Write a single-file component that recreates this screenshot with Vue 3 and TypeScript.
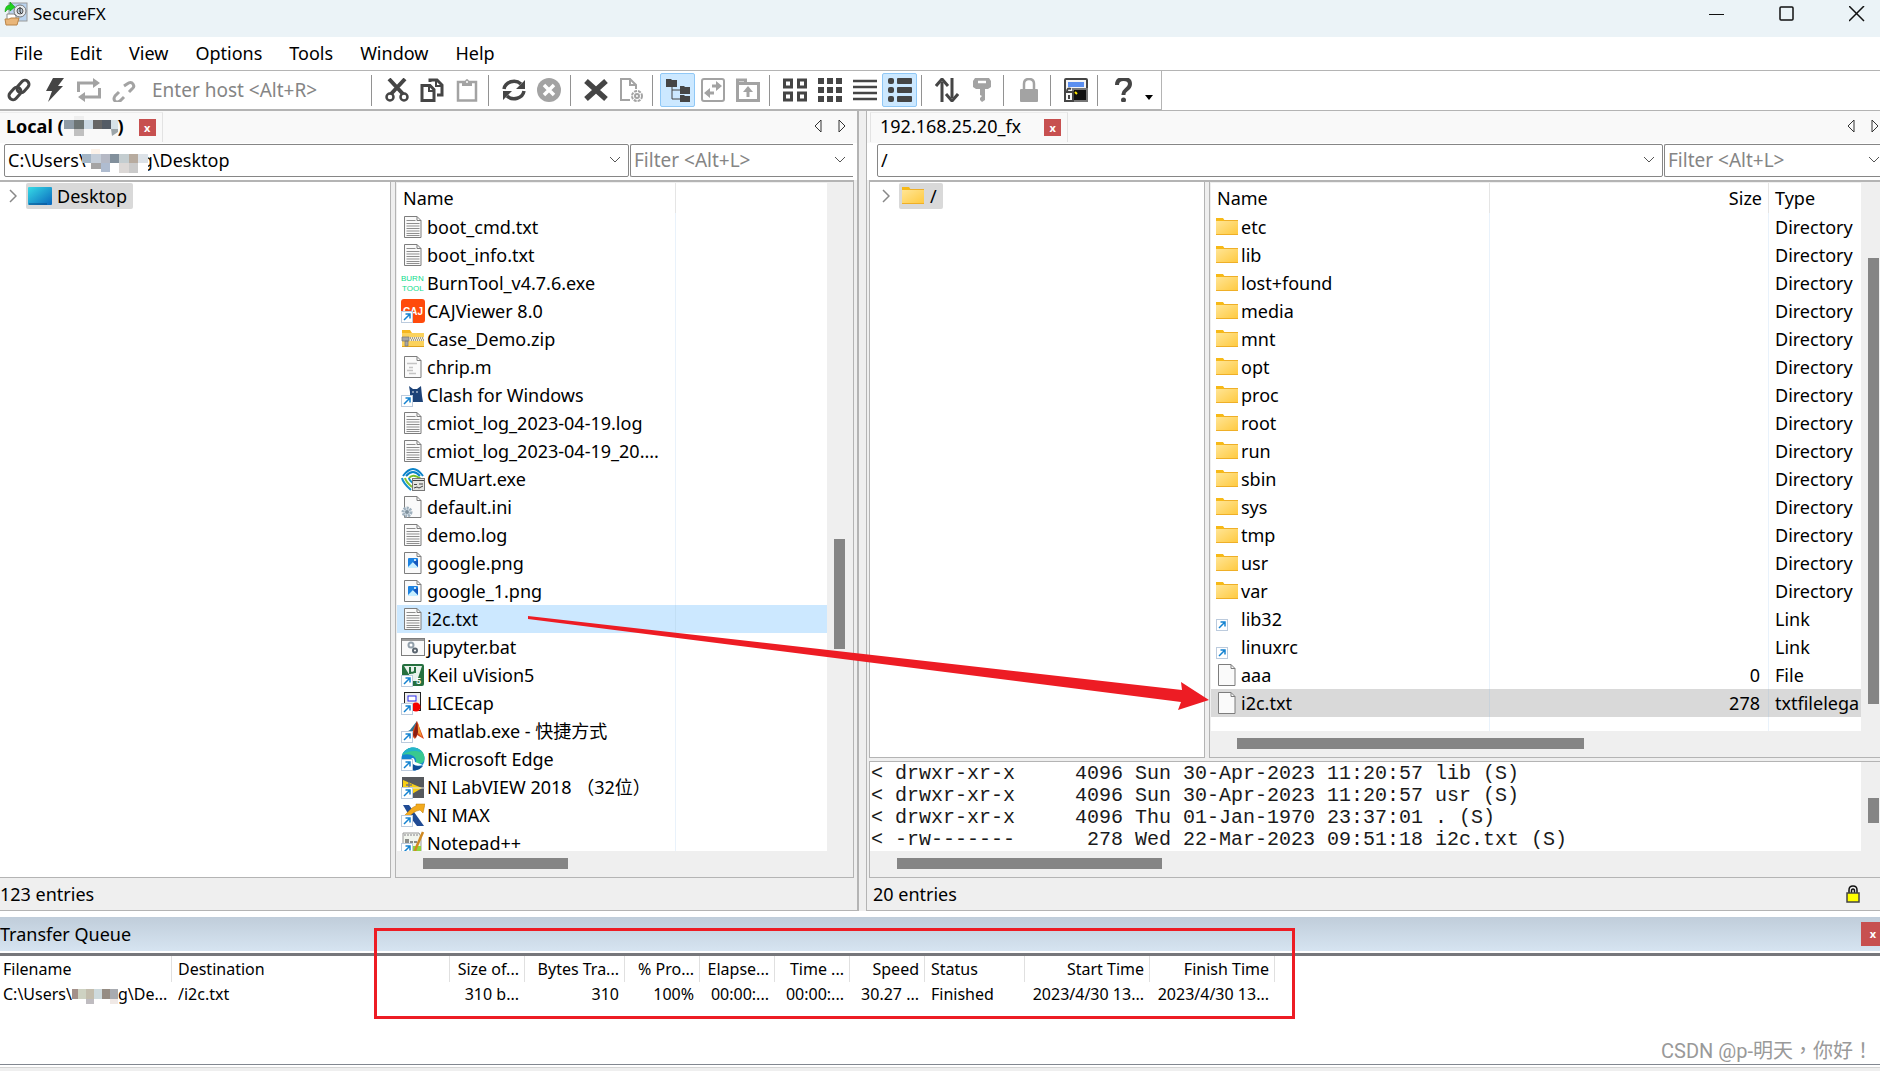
<script setup lang="ts">
import { ref } from 'vue'

interface FileRow {
  name: string
  icon: string
  size?: string
  type?: string
  selected?: boolean
}
interface Tool {
  label: string
  icon: string
  active?: boolean
}
interface Column {
  title: string
  value: string
  width: number
  right?: boolean
}

const menus = ['File', 'Edit', 'View', 'Options', 'Tools', 'Window', 'Help']

const badge =
  '<rect x=".5" y="12.5" width="11" height="11" fill="#fff" stroke="#bccbdd"/><path d="M3 21l5.500-5.500M4.500 15h4.500v4.500" fill="none" stroke="#1583d1" stroke-width="1.500"/>'
const page = '<path d="M3.500 1.500h12.500l4 4v17H3.500z" fill="#fafafa" stroke="#7d7d7d"/><path d="M16 1.500v4h4" fill="none" stroke="#7d7d7d"/>'

const fileIcons: Record<string, string> = {
  text: page + '<path d="M5.500 5.500h9M5.500 8.500h13M5.500 11h13M5.500 13.500h13M5.500 16h13M5.500 18.500h13M5.500 20.500h13" stroke="#8f8f8f"/>',
  code: page + '<path d="M6 8.500h10M8 12.500h4M6 15.500h6M8 18.500h7" stroke="#c4c4c4" stroke-width="1.500"/>',
  blank: page,
  burn: '<g fill="#10dc8c" font-family="Liberation Sans, sans-serif" font-size="8"><text x="0" y="10">BURN</text><text x="1" y="20">TOOL</text></g>',
  caj: '<rect width="24" height="24" rx="3" fill="#ff4a0c"/><text x="2" y="16" font-family="Liberation Sans, sans-serif" font-size="10" font-weight="bold" fill="#fff">CAJ</text>' + badge,
  zip: '<path d="M1 3h8l2 3h12v14H1z" fill="#f5b720"/><rect x="1" y="6" width="22" height="13" fill="#fbd25c"/><path d="M1 19.500h22" stroke="#dfa21d"/><path d="M1 12h22" stroke="#f3ead0" stroke-width="4"/><path d="M9 11h14M10 13h13" stroke="#555" stroke-dasharray="1 1"/><path d="M1 10h7v4H1zM4 14h3v5H4z" fill="#a6a6a6" stroke="#777" stroke-width=".7"/>',
  clash: '<path d="M8 3l4 3h4l4-3 1 10 1 6H9V9z" fill="#1d4277"/><circle cx="12" cy="9" r=".8" fill="#fff"/><circle cx="16" cy="9" r=".8" fill="#fff"/>' + badge,
  uart: '<g fill="none" stroke-width="2"><path d="M2 9Q12-5 22 9" stroke="#0b83c9"/><path d="M5 9Q12 1 19 9" stroke="#0b83c9"/><path d="M8 11Q12 6 20 12" stroke="#7abf2c"/><path d="M1 11q1 5 9 12" stroke="#1592cf"/><path d="M4 11q1 4 7 9" stroke="#83c332"/><path d="M8 11q0 2 4 5" stroke="#1592cf"/></g><rect x="11.500" y="11.500" width="12" height="12" fill="#e4e4e0" stroke="#777"/><path d="M12 13.500h11M13 17.500h3M18 17h4M13 21l3-1 2 1 4-2" stroke="#444" fill="none"/>',
  ini: page + '<circle cx="6" cy="17" r="4" fill="#d7e2ea" stroke="#9fb0bd" stroke-width="3" stroke-dasharray="2 1"/><circle cx="6" cy="17" r="2" fill="#7f909c"/>',
  image: page + '<rect x="7" y="7" width="10" height="10" rx="1" fill="#1d83e2"/><path d="M7 16l5-5 5 5v1H7z" fill="#c5edff"/><path d="M12 11l5 5V9z" fill="#1457bd"/><circle cx="14" cy="9" r="1" fill="#fff"/>',
  bat: '<rect x=".5" y="3.500" width="23" height="17" fill="#fafafa" stroke="#7d7d7d"/><path d="M1 5h22" stroke="#999" stroke-width="2"/><circle cx="10" cy="10" r="2.500" fill="#fff" stroke="#93a0ab" stroke-width="2"/><circle cx="14" cy="15.500" r="2" fill="#fff" stroke="#5c6670" stroke-width="2"/>',
  keil: '<rect x="1" y="1" width="22" height="22" rx="2" fill="#26703f"/><path d="M3 3h18l-5 15h-4z" fill="#e9f2ec"/><path d="M9 4v7M9 9q3 2 5-1V4v6" fill="none" stroke="#26703f" stroke-width="2"/><text x="15" y="21" font-family="Liberation Sans, sans-serif" font-size="9" font-weight="bold" fill="#fff">5</text>' + badge,
  lice: '<rect x="3.500" y="1.500" width="16" height="18" fill="#eee" stroke="#222"/><rect x="7" y="5" width="8" height="5" fill="#fff" stroke="#2a2ae8"/><circle cx="15" cy="16" r="4.500" fill="#f40000"/>' + badge,
  matlab: '<path d="M3 14l6-3 7-9-3 14z" fill="#2d7796"/><path d="M16 2l-6 14 4 4 2-4 7 4z" fill="#d9491a"/><path d="M16 2l-4 14 3 3 2-6z" fill="#8b1d12"/><path d="M17 4l4 14-4-4z" fill="#f59a35"/>' + badge,
  edge: '<circle cx="12" cy="12" r="11.500" fill="#1484cf"/><path d="M1 8C6-3 23-1 23.500 11c0 5-4 7-9 5 3-5-4-11-13.500-8z" fill="#39c98f"/><path d="M1 8C5-1 17-2 21 6 14 2 6 5 1 8z" fill="#23b5c9"/><path d="M10 13c1 6 7 7 12 6-3 4-9 6-13 3z" fill="#0d4d97"/><path d="M10 12q3-3 4 3l8 3q-7 2-10-1z" fill="#fff"/>' + badge,
  labview: '<rect x="1" y="2" width="22" height="21" fill="#56595d"/><path d="M2 5l19 8-10 6H2z" fill="#f7ce14"/><path d="M0 13h24" stroke="#e6e6e6"/><path d="M5 10h6M8 7v6" stroke="#777" stroke-width="1.500"/>' + badge,
  nimax: '<path d="M2 2h6l15 21h-7L9 14z" fill="#204b94"/><path d="M2 14C8 8 11 4 15 3V1h9l-2 9-3-3C14 8 10 11 7 15z" fill="#f3aa1d" stroke="#b6790c" stroke-width=".5"/>' + badge,
  npp: '<path d="M2 2h16l2 4v16H2z" fill="#f2f5ee" stroke="#999"/><path d="M3 4h15" stroke="#bbb" stroke-width="2" stroke-dasharray="2 1"/><path d="M5 8v4M7 8v4M9 11h3M13 11h3" stroke="#222"/><path d="M12 15h8v7h-8z" fill="#8fd63c"/><path d="M22 1l-7 16-1 3" stroke="#d08a23" stroke-width="2.500" fill="none"/>' + badge,
  folder: '<path d="M1 3h7l2 3h13v13H1z" fill="#f7b917"/><rect x="1" y="6" width="22" height="14" fill="url(#folderFill)"/><path d="M1 19.500h22M9 5.500h14" stroke="#efaf27"/>',
  link: '<g transform="translate(1 0)">' + badge + '</g>',
}

const localFiles: FileRow[] = [
  { name: 'boot_cmd.txt', icon: 'text' },
  { name: 'boot_info.txt', icon: 'text' },
  { name: 'BurnTool_v4.7.6.exe', icon: 'burn' },
  { name: 'CAJViewer 8.0', icon: 'caj' },
  { name: 'Case_Demo.zip', icon: 'zip' },
  { name: 'chrip.m', icon: 'code' },
  { name: 'Clash for Windows', icon: 'clash' },
  { name: 'cmiot_log_2023-04-19.log', icon: 'text' },
  { name: 'cmiot_log_2023-04-19_20....', icon: 'text' },
  { name: 'CMUart.exe', icon: 'uart' },
  { name: 'default.ini', icon: 'ini' },
  { name: 'demo.log', icon: 'text' },
  { name: 'google.png', icon: 'image' },
  { name: 'google_1.png', icon: 'image' },
  { name: 'i2c.txt', icon: 'text', selected: true },
  { name: 'jupyter.bat', icon: 'bat' },
  { name: 'Keil uVision5', icon: 'keil' },
  { name: 'LICEcap', icon: 'lice' },
  { name: 'matlab.exe - 快捷方式', icon: 'matlab' },
  { name: 'Microsoft Edge', icon: 'edge' },
  { name: 'NI LabVIEW 2018 （32位）', icon: 'labview' },
  { name: 'NI MAX', icon: 'nimax' },
  { name: 'Notepad++', icon: 'npp' },
]

const directories = ['etc', 'lib', 'lost+found', 'media', 'mnt', 'opt', 'proc', 'root', 'run', 'sbin', 'sys', 'tmp', 'usr', 'var']
const remoteFiles: FileRow[] = [
  ...directories.map((name) => ({ name, icon: 'folder', type: 'Directory' })),
  { name: 'lib32', icon: 'link', type: 'Link' },
  { name: 'linuxrc', icon: 'link', type: 'Link' },
  { name: 'aaa', icon: 'blank', size: '0', type: 'File' },
  { name: 'i2c.txt', icon: 'blank', size: '278', type: 'txtfilelega', selected: true },
]

const dark = '#454545'
const grey = '#a3a3a3'
const connectTools: Tool[] = [
  { label: 'Connect', icon: `<g fill="none" stroke="${dark}" stroke-width="3"><rect x="12" y="1.500" width="8" height="14" rx="4" transform="rotate(42 16 8.500)"/><rect x="4" y="8.500" width="8" height="14" rx="4" transform="rotate(42 8 15.500)"/></g>` },
  { label: 'Quick Connect', icon: `<path d="M11 0h11l-6 8h5L6 24l4-11H4z" fill="${dark}"/>` },
  { label: 'Reconnect', icon: `<path d="M1.500 14V5H17M22.500 10v9H7" fill="none" stroke="${grey}" stroke-width="3"/><path d="M16 0l7 5-7 5zM8 14l-7 5 7 5z" fill="${grey}"/>` },
  { label: 'Disconnect', icon: `<g fill="none" stroke="${grey}" stroke-width="3"><path d="M12 8l3-2q4-3 6 0t-1 5l-3 3M7 14l-4 4q-2 3 0 5t5 0l4-4"/></g>` },
]
const toolGroups: Tool[][] = [
  [
    { label: 'Cut', icon: `<g fill="none" stroke="${dark}" stroke-width="2.500"><circle cx="5" cy="19" r="3.500"/><circle cx="19" cy="19" r="3.500"/></g><path d="M4 1l14 15M20 1L6 16" stroke="${dark}" stroke-width="4"/>` },
    { label: 'Copy', icon: `<g fill="none" stroke="${dark}" stroke-width="3"><path d="M2 7.500h8l4 4V22.500H2z"/><path d="M10 4V2h7l5 5v10h-5"/></g><path d="M9 7v6h6M16 1v7h6" fill="none" stroke="${dark}" stroke-width="2"/>` },
    { label: 'Paste', icon: `<path d="M3 4h18v18.500H3z" fill="none" stroke="${grey}" stroke-width="2.500"/><path d="M7 3h3q2-4 4 0h3v5H7z" fill="${grey}"/><circle cx="12" cy="4" r="1" fill="#fff"/>` },
  ],
  [
    { label: 'Refresh', icon: `<g fill="none" stroke="${dark}" stroke-width="3.500"><path d="M2 11A10 9 0 0 1 19 6M22 13A10 9 0 0 1 5 18"/></g><path d="M23 2v9h-9zM1 22v-9h9z" fill="${dark}"/>` },
    { label: 'Stop', icon: `<circle cx="12" cy="12" r="12" fill="${grey}"/><path d="M7 7l10 10M17 7L7 17" stroke="#fff" stroke-width="3.500"/>` },
  ],
  [
    { label: 'Delete', icon: `<path d="M2 3l20 18M22 3L2 21" stroke="${dark}" stroke-width="5.500"/>` },
    { label: 'Properties', icon: `<g fill="none" stroke="${grey}" stroke-width="2"><path d="M11 22H2V1h9l6 6v4M11 1v6h6"/><circle cx="18" cy="18" r="2"/><circle cx="18" cy="18" r="5" stroke-dasharray="3 1"/></g>` },
  ],
  [
    { label: 'Tree View', active: true, icon: `<g fill="${dark}"><path d="M0 1h5l1 1h5v7H0zM14 8h4l1 1h5v7H14zM14 17h4l1 1h5v6H14z"/></g><path d="M6 9v12h9M6 12h9" fill="none" stroke="${dark}"/>` },
    { label: 'Synchronize', icon: `<rect x="1" y="1" width="22" height="22" rx="2" fill="none" stroke="${grey}" stroke-width="2"/><path d="M11 8h6M7 15h6" stroke="${grey}" stroke-width="3"/><path d="M15 3l6 5-6 5zM9 10l-6 5 6 5z" fill="${grey}"/>` },
    { label: 'Up One Level', icon: `<path d="M1.500 5.500h21v17h-21zM1.500 5V2h8v3" fill="none" stroke="${grey}" stroke-width="3"/><path d="M12 19v-7" stroke="${grey}" stroke-width="3"/><path d="M7 14l5-6 5 6z" fill="${grey}"/>` },
  ],
  [
    { label: 'Large Icons', icon: `<g fill="none" stroke="${dark}" stroke-width="3"><path d="M1.500 2h7v7h-7zM15.500 2h7v7h-7zM1.500 15h7v7h-7zM15.500 15h7v7h-7z"/></g>` },
    { label: 'Small Icons', icon: `<g fill="${dark}"><path d="M0 0h6v6H0zM9 0h6v6H9zM18 0h6v6h-6zM0 9h6v6H0zM9 9h6v6H9zM18 9h6v6h-6zM0 18h6v6H0zM9 18h6v6H9zM18 18h6v6h-6z"/></g>` },
    { label: 'List', icon: `<path d="M0 3h24M0 9h24M0 15h24M0 21h24" stroke="${dark}" stroke-width="2.500"/>` },
    { label: 'Details', active: true, icon: `<g fill="${dark}"><rect width="6" height="6" rx="2"/><rect y="9" width="6" height="6" rx="2"/><rect y="18" width="6" height="6" rx="2"/><rect x="9" width="15" height="6" rx="1"/><rect x="9" y="9" width="15" height="6" rx="1"/><rect x="9" y="18" width="15" height="6" rx="1"/></g>` },
  ],
  [
    { label: 'Transfer', icon: `<path d="M7 24V4M17 0v20" stroke="${dark}" stroke-width="3"/><path d="M1 8l6-7 6 7M11 16l6 7 6-7" fill="none" stroke="${dark}" stroke-width="3"/>` },
    { label: 'Key', icon: `<path d="M5 0h14l2 3v6l-3 2h-3v11l-3 2-2-2v-2l2-2-2-1v-6H6L3 9V3z" fill="${grey}"/><path d="M8 4h8" stroke="#fff" stroke-width="2.500"/>` },
  ],
  [{ label: 'Lock', icon: `<rect x="3" y="11" width="18" height="13" rx="1" fill="${grey}"/><path d="M7 12V6q0-5 5-5t5 5v6" fill="none" stroke="${grey}" stroke-width="2.500"/>` }],
  [{ label: 'Terminal', icon: `<rect x="1" y="1" width="22" height="20" rx="1" fill="#f4f4f4" stroke="${dark}" stroke-width="2"/><path d="M4 4h16v5H4z" fill="#5b8ff0"/><path d="M9 11h14v12H9z" fill="#111" stroke="#777" stroke-width="2"/><path d="M1 14h8v9H1z" fill="#f8f8f8" stroke="${dark}" stroke-width="2"/><path d="M3 14q0-5 4-3" fill="none" stroke="${dark}" stroke-width="2"/><path d="M11 14l2 2" stroke="#ffe600" stroke-width="2"/><path d="M5 17v4" stroke="${dark}" stroke-width="2"/>` }],
  [{ label: 'Help', icon: `<path d="M6 7q0-6 6.500-6t6.500 5q0 3-4 6-2.500 2-2.500 4v1" fill="none" stroke="${dark}" stroke-width="4"/><circle cx="12.500" cy="22" r="2.500" fill="${dark}"/>` }],
]

const logLines = [
  '< drwxr-xr-x     4096 Sun 30-Apr-2023 11:20:57 lib (S)',
  '< drwxr-xr-x     4096 Sun 30-Apr-2023 11:20:57 usr (S)',
  '< drwxr-xr-x     4096 Thu 01-Jan-1970 23:37:01 . (S)',
  '< -rw-------      278 Wed 22-Mar-2023 09:51:18 i2c.txt (S)',
]

const queue: Column[] = [
  { title: 'Destination', value: '/i2c.txt', width: 278 },
  { title: 'Size of...', value: '310 b...', width: 75, right: true },
  { title: 'Bytes Tra...', value: '310', width: 100, right: true },
  { title: '% Pro...', value: '100%', width: 75, right: true },
  { title: 'Elapse...', value: '00:00:...', width: 75, right: true },
  { title: 'Time ...', value: '00:00:...', width: 75, right: true },
  { title: 'Speed', value: '30.27 ...', width: 75, right: true },
  { title: 'Status', value: 'Finished', width: 100 },
  { title: 'Start Time', value: '2023/4/30 13...', width: 125, right: true },
  { title: 'Finish Time', value: '2023/4/30 13...', width: 125, right: true },
]

const host = ref('')
const localPath = ref('C:\\Users\\            g\\Desktop')
const remotePath = ref('/')
const localFilter = ref('')
const remoteFilter = ref('')
</script>

<template>
  <div class="app">
    <svg class="defs" width="0" height="0" aria-hidden="true">
      <defs>
        <linearGradient id="folderFill" x1="0" y1="0" x2="1" y2="1">
          <stop offset="0" stop-color="#ffe596" /><stop offset="1" stop-color="#ffc93d" />
        </linearGradient>
        <linearGradient id="desktopFill" x1="0" y1="0" x2="1" y2="1">
          <stop offset="0" stop-color="#36dbe6" /><stop offset="1" stop-color="#0a66bd" />
        </linearGradient>
      </defs>
    </svg>

    <header class="titlebar">
      <svg width="24" height="24" viewBox="0 0 24 24" aria-hidden="true">
        <rect x="5" y="1" width="18" height="18" fill="#b9d3ee" stroke="#9a9a9a" />
        <circle cx="16" cy="9" r="6" fill="#e8ecef" stroke="#777" />
        <circle cx="16" cy="9" r="3" fill="#b7c5d2" stroke="#555" />
        <path d="M16 5v5l2 2" stroke="#333" fill="none" />
        <path d="M1 10Q1 3 6 3V0l5 5-5 4V7Q3 7 1 10z" fill="#1ed21e" stroke="#0a8d0a" stroke-width=".5" />
        <path d="M3 12h7l2 2v5H3z" fill="#fff" stroke="#888" />
        <path d="M1 17h4l2-1h8l-2 7H2z" fill="#e9b67a" stroke="#b98447" />
      </svg>
      <h1>SecureFX</h1>
      <div class="window-buttons">
        <button aria-label="Minimize"><svg width="16" height="16"><path d="M0 8.500h15" stroke="#111" /></svg></button>
        <button aria-label="Maximize"><svg width="16" height="16"><rect x="1" y="1" width="13" height="13" rx="1" fill="none" stroke="#111" stroke-width="1.500" /></svg></button>
        <button aria-label="Close"><svg width="16" height="16"><path d="M0 0l15 15M15 0L0 15" stroke="#111" stroke-width="1.500" /></svg></button>
      </div>
    </header>

    <nav class="menubar"><button v-for="m in menus" :key="m">{{ m }}</button></nav>

    <div class="toolbar">
      <div class="tools">
        <button v-for="t in connectTools" :key="t.label" class="tool" :aria-label="t.label">
          <svg width="24" height="24" viewBox="0 0 24 24" v-html="t.icon" />
        </button>
        <input v-model="host" class="host" aria-label="Host" placeholder="Enter host &lt;Alt+R&gt;" />
        <template v-for="(group, g) in toolGroups" :key="g">
          <span class="sep" />
          <button v-for="t in group" :key="t.label" class="tool" :class="{ active: t.active }" :aria-label="t.label">
            <svg width="24" height="24" viewBox="0 0 24 24" v-html="t.icon" />
          </button>
        </template>
        <button class="more" aria-label="Toolbar options"><svg width="8" height="5"><path d="M0 0h8L4 5z" fill="#000" /></svg></button>
      </div>
    </div>

    <main class="panes">
      <section class="pane local" aria-label="Local">
        <div class="tabs">
          <div class="tab active">
            <span class="tab-label">Local (<svg width="54" height="20" viewBox="0 0 54 20" aria-hidden="true">
              <rect x="0" y="4" width="10" height="9" fill="#8e9ba6" /><rect x="10" y="4" width="10" height="9" fill="#6d7575" />
              <rect x="20" y="4" width="9" height="9" fill="#cbd9e4" /><rect x="29" y="4" width="9" height="9" fill="#666" />
              <rect x="38" y="4" width="9" height="9" fill="#545c66" /><rect x="47" y="4" width="7" height="9" fill="#d6e2e8" />
              <rect x="10" y="13" width="10" height="7" fill="#c0c0c0" /><path d="M47 13h7v3l-6 4z" fill="#9ca5a9" />
              <rect x="10" y="0" width="10" height="4" fill="#eee" />
            </svg>)</span>
            <button class="close" aria-label="Close tab">x</button>
          </div>
          <div class="nav">
            <button aria-label="Previous tab"><svg width="8" height="14"><path d="M7 1v12L1 7z" fill="none" stroke="#333" /></svg></button>
            <button aria-label="Next tab"><svg width="8" height="14"><path d="M1 1v12l6-6z" fill="none" stroke="#333" /></svg></button>
          </div>
        </div>
        <div class="paths">
          <div class="combo path">
            <input v-model="localPath" aria-label="Local path" />
            <svg class="mosaic" width="66" height="26" viewBox="0 0 66 26" aria-hidden="true">
              <rect x="0" y="5" width="9" height="9" fill="#a4b5c5" /><rect x="9" y="0" width="9" height="5" fill="#fcf2e9" />
              <rect x="9" y="5" width="10" height="9" fill="#c5ced9" /><rect x="19" y="5" width="9" height="9" fill="#b5b9c5" />
              <rect x="28" y="5" width="9" height="9" fill="#82909c" /><rect x="37" y="5" width="10" height="9" fill="#c4cdd0" />
              <rect x="47" y="5" width="9" height="9" fill="#b7ab9f" /><rect x="56" y="5" width="10" height="9" fill="#dce2e8" />
              <rect x="9" y="14" width="10" height="6" fill="#a5a4a4" /><rect x="19" y="14" width="9" height="9" fill="#afbcd0" />
              <rect x="37" y="14" width="10" height="10" fill="#dcd8d6" /><rect x="47" y="14" width="9" height="10" fill="#cacaca" />
              <rect x="56" y="14" width="10" height="12" fill="#fff" />
            </svg>
            <button aria-label="Local path history"><svg width="12" height="8"><path d="M1 1l5 5 5-5" fill="none" stroke="#555" /></svg></button>
          </div>
          <div class="combo filter">
            <input v-model="localFilter" aria-label="Local filter" placeholder="Filter &lt;Alt+L&gt;" />
            <button aria-label="Local filter history"><svg width="12" height="8"><path d="M1 1l5 5 5-5" fill="none" stroke="#555" /></svg></button>
          </div>
        </div>
        <div class="browser">
          <div class="tree">
            <button class="expand" aria-label="Expand Desktop"><svg width="8" height="14"><path d="M1 1l6 6-6 6" fill="none" stroke="#888" stroke-width="1.500" /></svg></button>
            <button class="node">
              <svg width="24" height="18"><rect width="24" height="18" rx="1" fill="url(#desktopFill)" /><path d="M1 17h18" stroke="#0b4d8b" /></svg>
              Desktop
            </button>
          </div>
          <div class="listing">
            <div class="viewport">
              <table class="files">
                <colgroup><col class="c-name" /><col /></colgroup>
                <thead><tr><th>Name</th><th></th></tr></thead>
                <tbody>
                  <tr v-for="f in localFiles" :key="f.name" :class="{ selected: f.selected }">
                    <td><span class="file"><svg width="24" height="24" viewBox="0 0 24 24" v-html="fileIcons[f.icon]" />{{ f.name }}</span></td>
                    <td></td>
                  </tr>
                </tbody>
              </table>
            </div>
            <div class="vbar"><i class="v-local" /></div>
            <div class="hbar"><i class="h-local" /></div>
          </div>
        </div>
        <footer class="status">123 entries</footer>
      </section>

      <section class="pane remote" aria-label="Remote">
        <div class="tabs">
          <div class="tab">
            <span class="tab-label">192.168.25.20_fx</span>
            <button class="close" aria-label="Close tab">x</button>
          </div>
          <div class="nav">
            <button aria-label="Previous tab"><svg width="8" height="14"><path d="M7 1v12L1 7z" fill="none" stroke="#333" /></svg></button>
            <button aria-label="Next tab"><svg width="8" height="14"><path d="M1 1v12l6-6z" fill="none" stroke="#333" /></svg></button>
          </div>
        </div>
        <div class="paths">
          <div class="combo path">
            <input v-model="remotePath" aria-label="Remote path" />
            <button aria-label="Remote path history"><svg width="12" height="8"><path d="M1 1l5 5 5-5" fill="none" stroke="#555" /></svg></button>
          </div>
          <div class="combo filter">
            <input v-model="remoteFilter" aria-label="Remote filter" placeholder="Filter &lt;Alt+L&gt;" />
            <button aria-label="Remote filter history"><svg width="12" height="8"><path d="M1 1l5 5 5-5" fill="none" stroke="#555" /></svg></button>
          </div>
        </div>
        <div class="browser">
          <div class="tree">
            <button class="expand" aria-label="Expand root"><svg width="8" height="14"><path d="M1 1l6 6-6 6" fill="none" stroke="#888" stroke-width="1.500" /></svg></button>
            <button class="node"><svg width="24" height="24" viewBox="0 0 24 24" v-html="fileIcons.folder" />/</button>
          </div>
          <div class="listing">
            <div class="viewport">
              <table class="files">
                <colgroup><col class="c-name" /><col class="c-size" /><col /></colgroup>
                <thead><tr><th>Name</th><th class="right">Size</th><th>Type</th></tr></thead>
                <tbody>
                  <tr v-for="f in remoteFiles" :key="f.name" :class="{ inactive: f.selected }">
                    <td><span class="file"><svg width="24" height="24" viewBox="0 0 24 24" v-html="fileIcons[f.icon]" />{{ f.name }}</span></td>
                    <td class="right">{{ f.size }}</td>
                    <td class="type">{{ f.type }}</td>
                  </tr>
                  <tr class="rest"><td></td><td></td><td></td></tr>
                </tbody>
              </table>
            </div>
            <div class="vbar"><i class="v-remote" /></div>
            <div class="hbar"><i class="h-remote" /></div>
          </div>
        </div>
        <div class="log">
          <pre>{{ logLines.join('\n') }}</pre>
          <div class="vbar"><i class="v-log" /></div>
          <div class="hbar"><i class="h-log" /></div>
        </div>
        <footer class="status">
          20 entries
          <svg width="14" height="18" viewBox="0 0 14 18" role="img" aria-label="Secure connection">
            <path d="M3 8V5q0-4 4-4t4 4v3M5.500 8V6q0-2 1.500-2t1.500 2v2" fill="none" stroke="#111" stroke-width="1.500" />
            <rect x="1" y="8" width="12" height="9" fill="#ff0" stroke="#444" stroke-width="1.500" />
          </svg>
        </footer>
      </section>
    </main>

    <section class="transfer" aria-label="Transfer Queue">
      <div class="transfer-head">
        <h2>Transfer Queue</h2>
        <button aria-label="Close transfer queue">x</button>
      </div>
      <div class="transfer-body">
        <table class="queue">
          <colgroup>
            <col class="q-file" />
            <col v-for="c in queue" :key="c.title" :style="{ width: c.width + 'px' }" />
          </colgroup>
          <thead>
            <tr>
              <th>Filename</th>
              <th v-for="c in queue" :key="c.title" :class="{ right: c.right }">{{ c.title }}</th>
            </tr>
          </thead>
          <tbody>
            <tr>
              <td>C:\Users\<svg width="46" height="16" viewBox="0 0 46 16" aria-hidden="true">
                <rect x="0" y="1" width="6" height="10" fill="#a3908a" /><rect x="6" y="1" width="8" height="10" fill="#ced2c2" />
                <rect x="14" y="1" width="8" height="10" fill="#c3bdad" /><rect x="22" y="1" width="8" height="10" fill="#cedadd" />
                <rect x="30" y="1" width="8" height="10" fill="#958c83" /><rect x="38" y="1" width="8" height="10" fill="#a8abb0" />
                <rect x="14" y="11" width="8" height="5" fill="#bfbcc0" /><rect x="38" y="11" width="8" height="5" fill="#f0e9e6" />
              </svg>g\De...</td>
              <td v-for="c in queue" :key="c.title" :class="{ right: c.right }">{{ c.value }}</td>
            </tr>
          </tbody>
        </table>
      </div>
    </section>

    <svg class="arrow" width="682" height="96" viewBox="0 0 682 96" aria-hidden="true">
      <path d="M0 0L654 74L653 66L681 84L650 94L653 86L0 3z" fill="#ed1c24" />
    </svg>
    <div class="highlight" />
    <div class="watermark">CSDN @p-明天，你好！</div>
  </div>
</template>

<style>
body {
  margin: 0;
}
</style>

<style scoped>
.app {
  position: relative;
  display: flex;
  flex-direction: column;
  height: 100vh;
  min-height: 640px;
  overflow: hidden;
  background: #fff;
  color: #000;
  font: 18px/24px 'Noto Sans', 'Noto Sans CJK SC', sans-serif;
}
.app * {
  box-sizing: border-box;
}
.defs {
  position: absolute;
}
button {
  margin: 0;
  padding: 0;
  border: 0;
  background: none;
  color: inherit;
  font: inherit;
}
input {
  min-width: 0;
  padding: 0;
  border: 0;
  outline: 0;
  background: none;
  color: inherit;
  font: inherit;
}
input::placeholder {
  color: #858585;
  font-size: 19px;
  opacity: 1;
}
svg {
  display: block;
  flex: none;
}

.titlebar {
  display: flex;
  flex: none;
  align-items: flex-start;
  gap: 5px;
  height: 37px;
  padding: 2px 0 0 4px;
  background: #ebf3f7;
}
.titlebar h1 {
  margin: 0;
  font-size: 17px;
  font-weight: 400;
}
.window-buttons {
  display: flex;
  gap: 54px;
  margin-left: auto;
  padding: 4px 15px 0 0;
}
.menubar {
  display: flex;
  flex: none;
  gap: 27px;
  height: 34px;
  padding: 0 0 2px 14px;
  border-bottom: 1px solid #b4b4b4;
}
.toolbar {
  flex: none;
  height: 40px;
  border-bottom: 1px solid #b4b4b4;
}
.tools {
  display: flex;
  align-items: center;
  width: 1162px;
  height: 39px;
  padding-left: 1px;
  border-right: 1px solid #b4b4b4;
  border-bottom: 1px solid #b4b4b4;
}
.tool {
  display: flex;
  align-items: center;
  justify-content: center;
  width: 35px;
  height: 34px;
  border: 1px solid transparent;
  border-radius: 2px;
}
.tool.active {
  border-color: #90c8f6;
  background: #cce8ff;
}
.host {
  width: 226px;
  padding-left: 11px;
}
.sep {
  width: 8px;
  height: 31px;
  margin-left: 4px;
  border-left: 1px solid #929292;
}
.more {
  padding: 14px 5px 0;
}

.panes {
  display: flex;
  flex: 1;
  gap: 7px;
  min-height: 0;
  background: #efefef;
}
.pane {
  display: flex;
  flex-direction: column;
  min-width: 0;
  border-bottom: 1px solid #b4b4b4;
}
.local {
  flex: 857 1 0;
  border-right: 2px solid #b4b4b4;
}
.remote {
  flex: 1013 1 0;
  border-left: 1px solid #b4b4b4;
}
.tabs {
  display: flex;
  flex: none;
  align-items: center;
  height: 32px;
  background: #f9f9f9;
}
.tab {
  display: flex;
  align-items: center;
  height: 30px;
  padding: 0 6px;
  border-right: 1px solid #e3e3e3;
  border-top: 1px solid #ececec;
}
.remote .tab {
  margin-left: 3px;
  padding-left: 9px;
  border-left: 1px solid #e3e3e3;
}
.tab-label {
  display: flex;
  align-items: center;
  padding-bottom: 3px;
}
.tab.active .tab-label {
  font-weight: 700;
}
.close {
  width: 17px;
  height: 17px;
  background: #c75050;
  color: #fff;
  font-size: 11px;
  font-weight: 700;
  line-height: 16px;
}
.local .close {
  margin-left: 15px;
}
.remote .close {
  margin-left: 23px;
}
.nav {
  display: flex;
  gap: 16px;
  margin-left: auto;
  padding: 0 11px 2px 0;
}
.remote .nav {
  padding-right: 1px;
}
.paths {
  display: flex;
  flex: none;
  gap: 1px;
  height: 37px;
  padding: 1px 4px 3px;
  background: #fff;
}
.remote .paths {
  padding-left: 10px;
  padding-right: 0;
}
.combo {
  position: relative;
  display: flex;
  align-items: center;
  height: 33px;
  padding: 0 7px 1px 3px;
  border: 1px solid #868686;
  border-radius: 2px;
}
.combo input {
  flex: 1;
}
.combo.path {
  flex: 1;
}
.combo.filter {
  flex: none;
  width: 223px;
  border-right: 0;
  border-radius: 2px 0 0 2px;
}
.remote .combo.filter {
  width: 216px;
  padding-right: 0;
}
.mosaic {
  position: absolute;
  left: 77px;
  top: 4px;
}
.browser {
  display: flex;
  flex: 1;
  gap: 4px;
  min-height: 0;
  margin-right: 3px;
  border-top: 2px solid #b4b4b4;
}
.remote .browser {
  margin: 0 0 0 2px;
}
.tree {
  display: flex;
  flex: 390 1 0;
  align-items: flex-start;
  padding-top: 1px;
  border-right: 1px solid #b4b4b4;
  border-bottom: 1px solid #b4b4b4;
  background: #fff;
}
.remote .tree {
  flex: 331 1 0;
  padding-left: 3px;
  border-left: 1px solid #b4b4b4;
}
.expand {
  padding: 6px 9px;
}
.node {
  display: flex;
  align-items: center;
  gap: 5px;
  height: 26px;
  padding: 0 6px 0 2px;
  border-radius: 2px;
  background: #d9d9d9;
}
.listing {
  display: grid;
  flex: 456 1 0;
  grid-template: minmax(0, 1fr) 26px / minmax(0, 1fr) 26px;
  min-width: 0;
  padding: 1px 0 0 1px;
  border: solid #b4b4b4;
  border-width: 0 1px 1px;
}
.remote .listing {
  flex: 669 1 0;
  grid-template-columns: minmax(0, 1fr) 19px;
  border-right: 0;
}
.viewport {
  overflow: hidden;
  background: #fff;
}
.vbar i,
.hbar i {
  display: block;
  background: #858585;
}
.vbar i {
  width: 11px;
  margin-left: 7px;
}
.hbar i {
  height: 11px;
  margin-top: 7px;
}
.vbar .v-local {
  height: 110px;
  margin-top: 356px;
}
.vbar .v-remote {
  height: 446px;
  margin-top: 75px;
}
.vbar .v-log {
  height: 25px;
  margin-top: 36px;
}
.hbar .h-local {
  width: 145px;
  margin-left: 26px;
}
.hbar .h-remote {
  width: 347px;
  margin-left: 26px;
}
.hbar .h-log {
  width: 265px;
  margin-left: 27px;
}
table {
  border-collapse: separate;
  border-spacing: 0;
  table-layout: fixed;
}
th,
td {
  overflow: hidden;
  padding: 0;
  font-weight: 400;
  text-align: left;
  white-space: nowrap;
}
.files {
  width: 100%;
  height: 100%;
}
.c-name {
  width: 279px;
}
.c-size {
  width: 279px;
}
.files th {
  height: 30px;
  padding: 0 6px;
  border-right: 1px solid #e5e5e5;
}
.files td {
  height: 28px;
  border-right: 1px solid #e9f2fb;
}
.files th:last-child,
.files td:last-child {
  border-right: 0;
}
.files td.right {
  padding-right: 8px;
}
.files td.type {
  padding-left: 6px;
}
.files tr.rest td {
  height: auto;
}
.file {
  display: flex;
  align-items: center;
  gap: 2px;
  height: 28px;
  padding-left: 4px;
}
.selected td {
  background: #cce8ff;
}
.selected td:first-child {
  border-color: #c2dff5;
}
.inactive td {
  border-color: #c9d2da;
  background: #d9d9d9;
}
.right {
  text-align: right;
}
.log {
  display: grid;
  flex: none;
  grid-template: 89px 26px / minmax(0, 1fr) 19px;
  margin: 3px 0 0 2px;
  border: solid #b4b4b4;
  border-width: 1px 0 1px 1px;
}
.log pre {
  margin: 0;
  overflow: hidden;
  padding: 1px 1px 0;
  background: #fff;
  color: #1a1a1a;
  font: 20px/22px 'Liberation Mono', monospace;
}
.status {
  display: flex;
  flex: none;
  align-items: center;
  justify-content: space-between;
  height: 32px;
}
.remote .status {
  padding: 0 20px 0 6px;
}

.transfer {
  flex: none;
  padding-top: 6px;
}
.transfer-head {
  display: flex;
  align-items: center;
  justify-content: space-between;
  height: 34px;
  background: linear-gradient(#c0cdda, #d6e4f1);
}
.transfer-head h2 {
  margin: 0;
  font-size: 18px;
  font-weight: 400;
}
.transfer-head button {
  width: 19px;
  height: 24px;
  padding-left: 5px;
  background: #c75050;
  color: #fff;
  font-size: 11px;
  font-weight: 700;
  line-height: 20px;
}
.transfer-body {
  height: 112px;
  margin: 2px 0 2px;
  border-top: 3px solid #76777b;
  border-bottom: 1px solid #828790;
}
.transfer::after {
  display: block;
  height: 3px;
  border-top: 1px solid #d5d5d5;
  background: #efefef;
  content: '';
}
.queue {
  width: 1275px;
  font-size: 16px;
  line-height: 24px;
}
.q-file {
  width: 172px;
}
.queue th,
.queue td {
  height: 24px;
  padding: 0 5px 0 6px;
}
.queue th {
  height: 26px;
  border-right: 1px solid #e0e0e0;
}
.queue td {
  border-right: 1px solid transparent;
}
.queue th:first-child,
.queue td:first-child {
  padding: 0 0 0 3px;
}
.queue svg {
  display: inline-block;
  vertical-align: middle;
}

.arrow {
  position: absolute;
  left: 528px;
  top: 616px;
  pointer-events: none;
}
.highlight {
  position: absolute;
  left: 374px;
  top: 928px;
  width: 921px;
  height: 91px;
  border: 3px solid #ed1c24;
  pointer-events: none;
}
.watermark {
  position: absolute;
  right: 7px;
  bottom: 6px;
  color: #999;
  font: 20px/28px Roboto, 'Noto Sans CJK TC', sans-serif;
}
</style>
